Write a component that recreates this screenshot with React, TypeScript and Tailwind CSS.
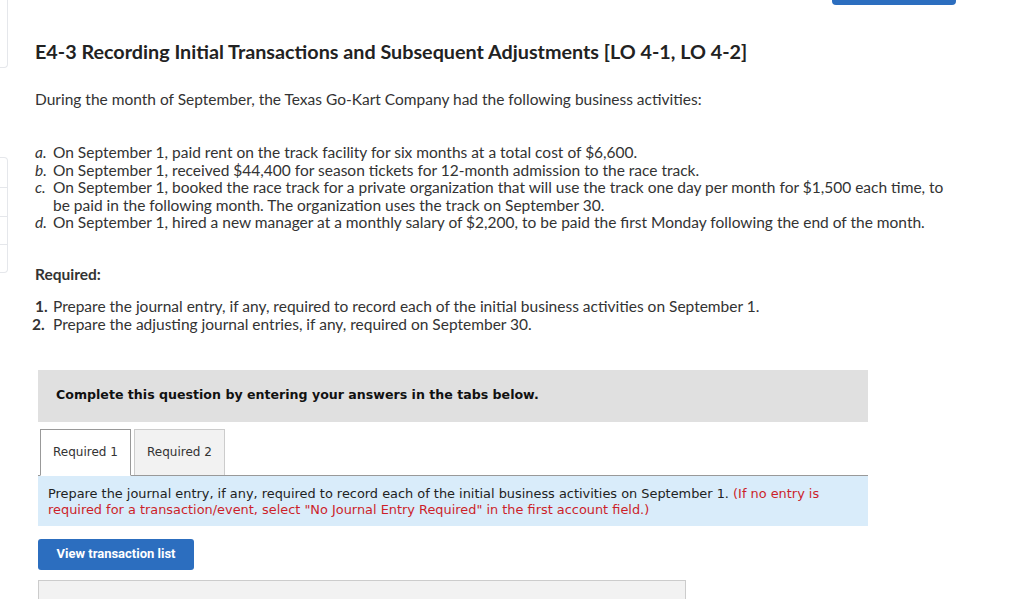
import React from 'react';

const body = { fontFamily: 'Lato, "Open Sans", sans-serif' };
const verdana = { fontFamily: '"DejaVu Sans", Verdana, sans-serif' };

const activities = [
  { key: 'a.', text: 'On September 1, paid rent on the track facility for six months at a total cost of $6,600.' },
  { key: 'b.', text: 'On September 1, received $44,400 for season tickets for 12-month admission to the race track.' },
  {
    key: 'c.',
    text: 'On September 1, booked the race track for a private organization that will use the track one day per month for $1,500 each time, to be paid in the following month. The organization uses the track on September 30.',
  },
  { key: 'd.', text: 'On September 1, hired a new manager at a monthly salary of $2,200, to be paid the first Monday following the end of the month.' },
];

const SideStub: React.FC = () => (
  <div className="w-2 shrink-0 flex flex-col">
    <div className="h-[68px] border-r border-b border-gray-200 rounded-br" />
    <div className="mt-[89px] border-y border-r border-gray-200 rounded-r">
      <div className="h-[30px] border-b border-gray-200" />
      <div className="h-[29px] border-b border-gray-200" />
      <div className="h-[28px] border-b border-gray-200" />
      <div className="h-[27px]" />
    </div>
  </div>
);

export default function App() {
  return (
    <div className="relative w-[1024px] h-[599px] overflow-hidden bg-white text-[#333]">
      <div className="absolute left-[832px] top-0 w-[124px] h-[5px] bg-[#2c6ebf] rounded-b" />
      <div className="flex">
        <SideStub />
        <div className="ml-[27px] flex-1" style={body}>
          <h1 className="mt-[39px] text-[19.75px] leading-[26px] font-bold text-[#222]">
            E4-3 Recording Initial Transactions and Subsequent Adjustments [LO 4-1, LO 4-2]
          </h1>
          <p className="mt-[23px] text-[15.5px] leading-[22px]">
            During the month of September, the Texas Go-Kart Company had the following business activities:
          </p>
          <ul className="mt-[34px] w-[918px] text-[15.5px] leading-[17.5px]">
            {activities.map((a) => (
              <li key={a.key} className="flex">
                <span className="w-[18px] shrink-0 italic">{a.key}</span>
                <span>{a.text}</span>
              </li>
            ))}
          </ul>
          <p className="mt-[32px] text-[15.5px] leading-[20px] font-bold">Required:</p>
          <ol className="mt-[13px] text-[15.5px] leading-[18px]">
            <li className="flex">
              <span className="w-[18px] shrink-0 font-bold">1.</span>
              <span>Prepare the journal entry, if any, required to record each of the initial business activities on September 1.</span>
            </li>
            <li className="flex -ml-[3px]">
              <span className="w-[21px] shrink-0 font-bold">2.</span>
              <span>Prepare the adjusting journal entries, if any, required on September 30.</span>
            </li>
          </ol>

          <div className="ml-[3px] w-[830px]" style={verdana}>
            <div className="mt-[37px] h-[52px] bg-[#e0e0e0] flex items-center px-[18px]">
              <p className="text-[12.6px] font-bold text-[#111]">Complete this question by entering your answers in the tabs below.</p>
            </div>

            <div className="mt-[7px] flex items-end gap-[3px] pl-[2px] border-b border-[#999]">
              <div className="h-[47px] w-[91px] -mb-px bg-white border border-[#999] border-b-white flex items-center justify-center text-[12px]">
                Required 1
              </div>
              <div className="h-[46px] w-[91px] bg-[#f2f2f2] border border-[#ccc] border-b-0 flex items-center justify-center text-[12px]">
                Required 2
              </div>
            </div>

            <div className="h-[50px] bg-[#d9ecfa] px-[10px] pt-[10px] text-[12.9px] leading-[16px] text-[#222]">
              Prepare the journal entry, if any, required to record each of the initial business activities on September 1.{' '}
              <span className="text-[#cc1f2a]">
                (If no entry is required for a transaction/event, select "No Journal Entry Required" in the first account field.)
              </span>
            </div>

            <button
              className="mt-[13px] h-[31px] w-[156px] rounded-[3px] bg-[#2c6ebf] text-white text-[13px] font-bold"
              style={{ fontFamily: 'Roboto, sans-serif' }}
            >
              View transaction list
            </button>

            <div className="mt-[10px] w-[648px] h-[40px] bg-[#f2f2f2] border border-[#ccc]" />
          </div>
        </div>
      </div>
    </div>
  );
}
